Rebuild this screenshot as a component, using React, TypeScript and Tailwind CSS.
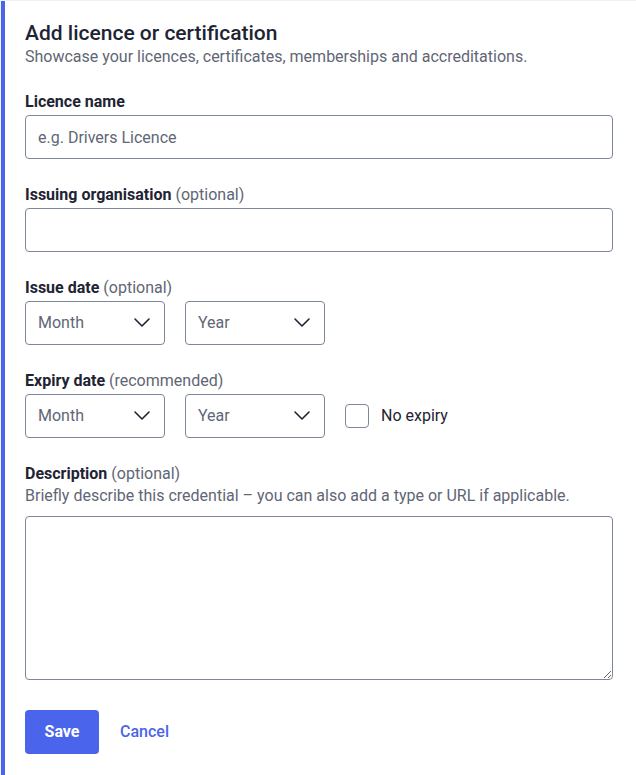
const font = { fontFamily: "Roboto, 'Noto Sans', sans-serif" };

function Label({ text, hint }: { text: string; hint?: string }) {
  return (
    <div className="text-[16px] leading-[22px] text-[#1e2433]">
      <span className="font-bold">{text}</span>
      {hint && <span className="text-[#5f6675]"> ({hint})</span>}
    </div>
  );
}

function Select({ placeholder }: { placeholder: string }) {
  return (
    <div className="relative w-[140px] h-[44px] border border-[#7d879a] rounded-[4px] flex items-center pl-3 text-[16px] text-[#5f6675] bg-white">
      {placeholder}
      <svg
        className="absolute right-[14px] top-[16px] w-[16px] h-[9px] text-[#1e2433]"
        viewBox="0 0 16 9"
        fill="none"
        stroke="currentColor"
        strokeWidth={1.6}
        strokeLinecap="round"
        strokeLinejoin="round"
      >
        <path d="M1 1l7 7 7-7" />
      </svg>
    </div>
  );
}

export default function App() {
  return (
    <div className="bg-[#f1f2f6] pt-px pl-px min-h-[775px]" style={font}>
      <div className="bg-white border-l-4 border-[#4a64eb] pl-5 pr-[23px] pt-[18px] min-h-[774px] pb-6">
        <h2 className="text-[21px] leading-[28px] font-medium text-[#1e2433]">Add licence or certification</h2>
        <p className="text-[16px] leading-[20px] text-[#5f6675]">
          Showcase your licences, certificates, memberships and accreditations.
        </p>

        <div className="mt-6">
          <Label text="Licence name" />
          <input
            className="mt-[2px] w-full h-[44px] border border-[#7d879a] rounded-[4px] px-3 text-[16px] text-[#1e2433] placeholder:text-[#5f6675] outline-none"
            placeholder="e.g. Drivers Licence"
          />
        </div>

        <div className="mt-[25px]">
          <Label text="Issuing organisation" hint="optional" />
          <input className="mt-[2px] w-full h-[44px] border border-[#7d879a] rounded-[4px] px-3 text-[16px] outline-none" />
        </div>

        <div className="mt-[25px]">
          <Label text="Issue date" hint="optional" />
          <div className="mt-[2px] flex gap-5">
            <Select placeholder="Month" />
            <Select placeholder="Year" />
          </div>
        </div>

        <div className="mt-[25px]">
          <Label text="Expiry date" hint="recommended" />
          <div className="mt-[2px] flex items-center gap-5">
            <Select placeholder="Month" />
            <Select placeholder="Year" />
            <label className="flex items-center gap-3 text-[16px] text-[#1e2433]">
              <span className="w-6 h-6 border border-[#7d879a] rounded-[4px] bg-white" />
              No expiry
            </label>
          </div>
        </div>

        <div className="mt-[25px]">
          <Label text="Description" hint="optional" />
          <div className="text-[16px] leading-[22px] text-[#5f6675]">
            Briefly describe this credential – you can also add a type or URL if applicable.
          </div>
          <textarea className="mt-[9px] block w-full h-[164px] border border-[#7d879a] rounded-[4px] p-3 text-[16px] outline-none" />
        </div>

        <div className="mt-[30px] flex items-center gap-[21px]">
          <button className="w-[74px] h-[44px] rounded-[4px] bg-[#4a64eb] text-white text-[16px] font-bold">Save</button>
          <button className="text-[16px] font-medium text-[#4a64eb]">Cancel</button>
        </div>
      </div>
    </div>
  );
}
